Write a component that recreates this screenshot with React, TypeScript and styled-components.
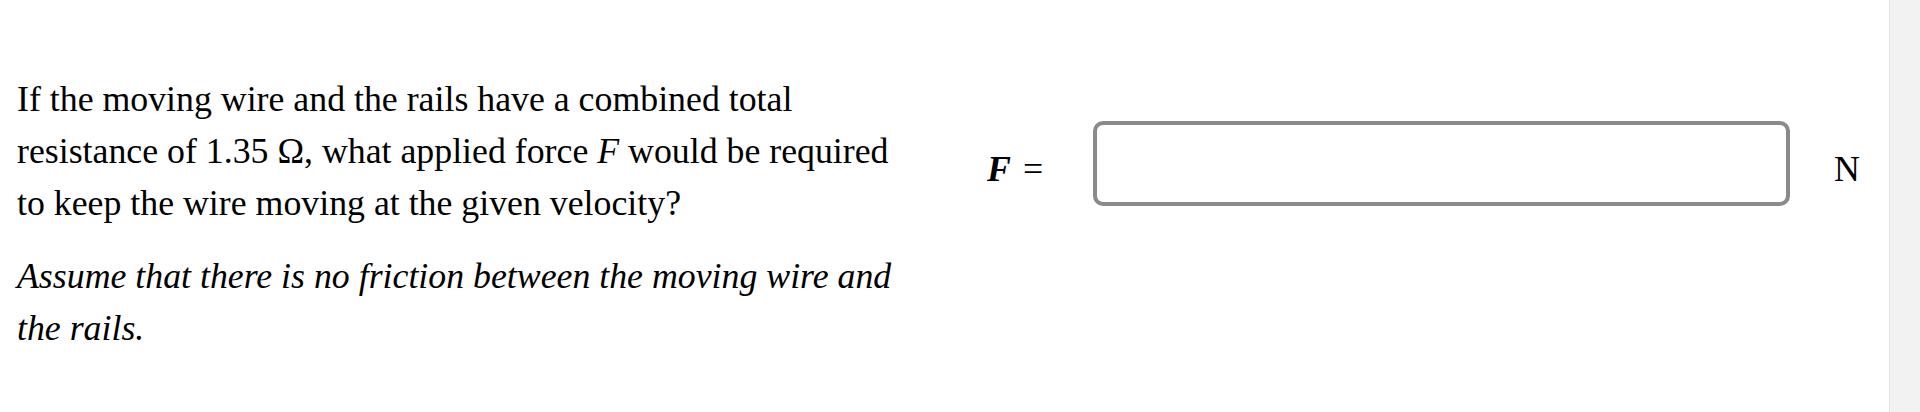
import React from "react";
import styled, { createGlobalStyle } from "styled-components";

const GlobalStyle = createGlobalStyle`
  html, body {
    margin: 0;
    padding: 0;
    background: #ffffff;
  }
  body {
    font-family: "Liberation Serif", "Times New Roman", serif;
    color: #000000;
  }
`;

const Page = styled.div`
  display: flex;
  height: 412px;
  overflow: hidden;
`;

const Main = styled.main`
  flex: 1;
  display: flex;
  align-items: flex-start;
  padding: 73px 0 0 17px;
`;

const Question = styled.div`
  width: 900px;
  font-size: 35.8px;
  line-height: 52px;
`;

const Para = styled.p<{ $italic?: boolean }>`
  margin: 0 0 21px;
  font-style: ${(p) => (p.$italic ? "italic" : "normal")};
`;

const Var = styled.i`
  font-style: italic;
`;

const Answer = styled.div`
  display: flex;
  align-items: center;
  height: 85px;
  margin: 48px 0 0 70px;
  font-size: 35.8px;
`;

const Label = styled.span`
  display: flex;
  align-items: baseline;
  gap: 12px;
  padding-top: 10px;
  width: 106px;
`;

const Symbol = styled.b`
  font-style: italic;
  font-weight: 700;
`;

const Input = styled.input`
  box-sizing: border-box;
  width: 697px;
  height: 85px;
  border: 4px solid #8a8a8a;
  border-radius: 10px;
  background: #ffffff;
  outline: none;
  font: inherit;
  padding: 0 16px;
`;

const Unit = styled.span`
  padding: 10px 0 0 44px;
`;

const Gutter = styled.div`
  width: 30px;
  flex-shrink: 0;
  background: #f2f2f2;
  border-left: 1px solid #e2e2e2;
`;

export default function App() {
  return (
    <>
      <GlobalStyle />
      <Page>
        <Main>
          <Question>
            <Para>
              If the moving wire and the rails have a combined total resistance
              of 1.35&nbsp;Ω, what applied force <Var>F</Var> would be required
              to keep the wire moving at the given velocity?
            </Para>
            <Para $italic>
              Assume that there is no friction between the moving wire and the
              rails.
            </Para>
          </Question>
          <Answer>
            <Label>
              <Symbol>F</Symbol>
              <span>=</span>
            </Label>
            <Input type="text" aria-label="F" />
            <Unit>N</Unit>
          </Answer>
        </Main>
        <Gutter />
      </Page>
    </>
  );
}
